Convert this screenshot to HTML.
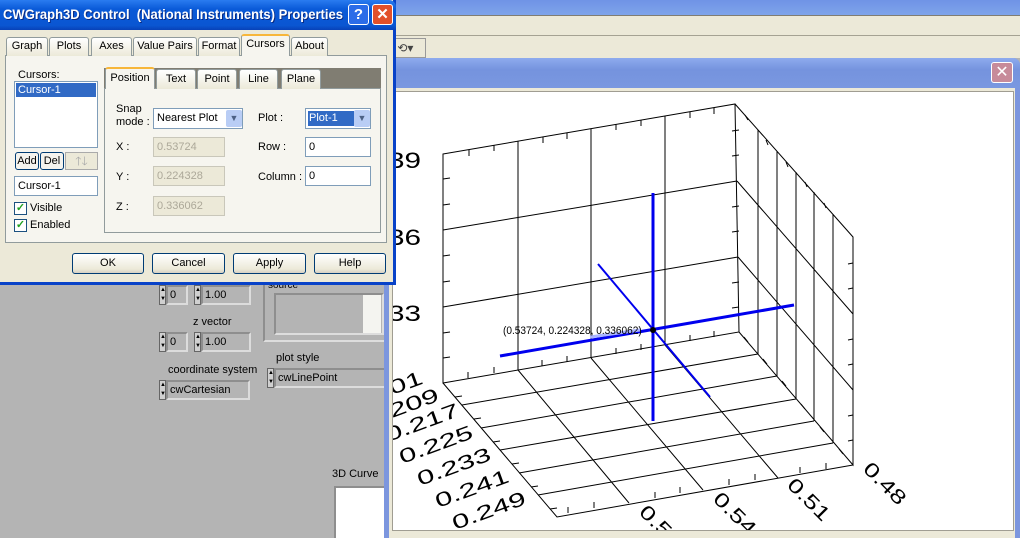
<!DOCTYPE html>
<html><head><meta charset="utf-8"><style>
*{box-sizing:border-box;margin:0;padding:0}
html,body{width:1020px;height:538px;overflow:hidden}
body{position:relative;background:#b4b4b4;font-family:Tahoma,"Liberation Sans",sans-serif;font-size:11px;color:#000}
.a{position:absolute}
.tab{position:absolute;top:37px;height:19px;border:1px solid #919b9c;border-bottom:none;background:linear-gradient(#fff,#ece9d8);border-radius:3px 3px 0 0;text-align:center;line-height:17px}
.stab{position:absolute;top:69px;height:20px;border:1px solid #919b9c;border-bottom:none;background:linear-gradient(#fff,#ece9d8);border-radius:3px 3px 0 0;text-align:center;line-height:19px}
.btn{position:absolute;top:253px;height:21px;border:1px solid #003c74;border-radius:3px;background:linear-gradient(#fff,#ece9d8 80%,#d6d0c5);text-align:center;line-height:19px}
.in{position:absolute;height:20px;border:1px solid #7f9db9;background:#fff;padding-left:3px;line-height:18px}
.dis{position:absolute;height:20px;border:1px solid #c9c7ba;background:#ece9d8;color:#aca899;padding-left:3px;line-height:18px}
.chk{position:absolute;width:13px;height:13px;border:1px solid #1c5180;background:#fff;color:#21a121;font-size:11px;line-height:11px;text-align:center;font-weight:bold}
.lv{position:absolute;border:2px solid #8e8e8e;border-right-color:#dcdcdc;border-bottom-color:#dcdcdc;background:#b4b4b4;height:20px;line-height:16px;padding-left:2px;font-size:11px}
.sp{position:absolute;width:7px;height:20px;background:#d0d0d0;border:1px solid #666;font-size:6px;line-height:9px;text-align:center}
</style></head><body>
<div class="a" style="left:395px;top:0;width:625px;height:15px;background:linear-gradient(#6f93e6,#7ea4ea)"></div>
<div class="a" style="left:395px;top:15px;width:625px;height:43px;background:#ece9d8;border-top:1px solid #807d72"></div>
<div class="a" style="left:395px;top:35px;width:625px;height:1px;background:#a5a293"></div>
<div class="a" style="left:393px;top:38px;width:33px;height:20px;border:1px solid #999;background:#ece9d8;font-size:12px;color:#444;line-height:18px">&nbsp;⟲▾</div>

<div class="sp" style="left:159px;top:285px">▲<br>▼</div><div class="lv" style="left:166px;top:285px;width:22px">0</div>
<div class="sp" style="left:194px;top:285px">▲<br>▼</div><div class="lv" style="left:201px;top:285px;width:50px">1.00</div>
<div class="a" style="left:193px;top:316px">z vector</div>
<div class="sp" style="left:159px;top:332px">▲<br>▼</div><div class="lv" style="left:166px;top:332px;width:22px">0</div>
<div class="sp" style="left:194px;top:332px">▲<br>▼</div><div class="lv" style="left:201px;top:332px;width:50px">1.00</div>
<div class="a" style="left:168px;top:364px">coordinate system</div>
<div class="sp" style="left:159px;top:380px">▲<br>▼</div><div class="lv" style="left:166px;top:380px;width:84px">cwCartesian</div>
<div class="a" style="left:263px;top:282px;width:125px;height:60px;border:2px solid #8e8e8e;border-right-color:#ddd;border-bottom-color:#ddd"></div>
<div class="a" style="left:268px;top:280px;font-size:10px">source</div>
<div class="a" style="left:274px;top:293px;width:110px;height:42px;border:2px solid #8e8e8e;border-right-color:#ddd;border-bottom-color:#ddd"></div>
<div class="a" style="left:363px;top:295px;width:18px;height:38px;background:#f4f4f0"></div>
<div class="a" style="left:276px;top:352px">plot style</div>
<div class="sp" style="left:267px;top:368px">▲<br>▼</div><div class="lv" style="left:274px;top:368px;width:114px">cwLinePoint</div>
<div class="a" style="left:332px;top:468px">3D Curve</div>
<div class="a" style="left:334px;top:486px;width:60px;height:52px;background:#fff;border:2px solid #8e8e8e;border-bottom:none"></div>

<div class="a" style="left:384px;top:58px;width:636px;height:480px;background:#ece9d8;border-radius:7px 7px 0 0;border-left:5px solid #7c96de;border-right:5px solid #7c96de"></div>
<div class="a" style="left:384px;top:58px;width:636px;height:30px;background:linear-gradient(#8eabee,#7593de 40%,#7a98e0);border-radius:7px 7px 0 0"></div>
<div class="a" style="left:991px;top:62px;width:22px;height:21px;background:#c78b9a;border:1px solid #fff;border-radius:3px;color:#fff;font-size:16px;line-height:19px;text-align:center;font-family:'Liberation Sans'">✕</div>
<div class="a" style="left:389px;top:88px;width:626px;height:450px;background:#ece9d8"></div>
<div class="a" style="left:392px;top:91px;width:622px;height:440px;background:#fff;border:1px solid #a09d92"></div>
<svg class="a" style="left:0;top:0" width="1020" height="538" viewBox="0 0 1020 538">
<defs><clipPath id="c"><rect x="393" y="92" width="620" height="438"/></clipPath></defs>
<g clip-path="url(#c)" stroke="#000" stroke-width="1" fill="none">
<path d="M443 154 L735 104 L739 332 L443 383 Z"/>
<path d="M443 230 L737 181 M443 307 L738 257"/>
<path d="M518 141 L518 370 M591 129 L591 358 M665 116 L665 345"/>
<path d="M735 104 L853 237 L853 465 L739 332"/>
<path d="M737 181 L853 314 M738 257 L853 390"/>
<path d="M758 130 L758 354 M777 151 L777 376 M796 172 L796 399 M814 192 L814 421 M833 214 L833 443"/>
<path d="M443 383 L557 517 L853 465"/>
<path d="M462 405 L758 354 M481 428 L777 376 M500 450 L796 399 M519 473 L814 421 M538 495 L833 443"/>
<path d="M518 370 L629 503 M591 358 L703 490 M665 345 L778 478"/>
<path d="M443 179 L450 178 M443 205 L450 204 M443 256 L450 255 M443 282 L450 281 M443 333 L450 332 M443 358 L450 357 M469 150 L469 156 M494 145 L494 151 M543 137 L543 143 M567 133 L567 139 M616 124 L616 130 M641 120 L641 126 M690 112 L690 118 M714 108 L714 114 M739 130 L732 131 M739 155 L732 156 M739 206 L732 207 M739 231 L732 232 M739 282 L732 283 M739 307 L732 308 M853 263 L848 264 M853 288 L848 289 M853 339 L848 340 M853 364 L848 365 M853 415 L848 416 M853 440 L848 441 M455 397 L462 396 M474 419 L481 418 M493 442 L500 441 M512 464 L519 463 M531 487 L538 486 M550 509 L557 508 M568 513 L568 507 M594 508 L594 502 M655 498 L655 492 M680 493 L680 487 M729 485 L729 479 M755 480 L755 474 M800 473 L800 467 M826 469 L826 463 M748 342 L744 337 M767 364 L763 359 M786 386 L782 381 M805 409 L801 404 M824 432 L820 427 M843 454 L839 449 M468 378 L468 372 M494 373 L494 367 M542 366 L542 360 M567 362 L567 356 M616 354 L616 348 M641 350 L641 344 M690 341 L690 335 M714 337 L714 331 M745 115 L748 120 M766 140 L768 145 M786 162 L788 167 M805 182 L807 187 M824 203 L826 208"/>
</g>
<g clip-path="url(#c)" stroke="#0000ee" stroke-linecap="butt">
<line x1="500" y1="356" x2="794" y2="305" stroke-width="3"/>
<line x1="653" y1="193" x2="653" y2="421" stroke-width="3"/>
<line x1="598" y1="264" x2="710" y2="397" stroke-width="2"/>
<line x1="590" y1="337" x2="640" y2="330" stroke="#aab4ff" stroke-width="3"/>
</g>
<circle cx="653" cy="330" r="3" fill="#000"/>
<g clip-path="url(#c)" font-family="Liberation Sans,sans-serif" fill="#000">
<text font-size="11" transform="translate(503,334) scale(0.92,1)">(0.53724, 0.224328, 0.336062)</text>
<g font-size="22">
<text transform="translate(388,168) scale(1.35,1)">39</text>
<text transform="translate(388,245) scale(1.35,1)">36</text>
<text transform="translate(388,321) scale(1.35,1)">33</text>
<text transform="translate(392,395) rotate(-20) scale(1.4,0.9)">01</text>
<text transform="translate(392,418) rotate(-20) scale(1.4,0.9)">209</text>
<text transform="translate(388,442) rotate(-20) scale(1.4,0.9)">0.217</text>
<text transform="translate(402,464) rotate(-20) scale(1.4,0.9)">0.225</text>
<text transform="translate(420,486) rotate(-20) scale(1.4,0.9)">0.233</text>
<text transform="translate(438,508) rotate(-20) scale(1.4,0.9)">0.241</text>
<text transform="translate(455,530) rotate(-20) scale(1.4,0.9)">0.249</text>
<text transform="translate(862,470) rotate(45) scale(1.2,0.9)">0.48</text>
<text transform="translate(786,486) rotate(45) scale(1.2,0.9)">0.51</text>
<text transform="translate(712,500) rotate(45) scale(1.2,0.9)">0.54</text>
<text transform="translate(638,513) rotate(45) scale(1.2,0.9)">0.57</text>
</g></g>
</svg>

<div class="a" style="left:0;top:0;width:396px;height:285px;background:#ece9d8;border:3px solid #0842c8;border-top:none;border-left:none"></div>
<div class="a" style="left:0;top:0;width:396px;height:30px;background:linear-gradient(#2a7cf0,#0a5ad8 30%,#0a56d2 85%,#0842b8);border-radius:0 7px 0 0"></div>
<div class="a" style="left:3px;top:6px;color:#fff;font-weight:bold;font-size:14px;font-family:'Liberation Sans',sans-serif;text-shadow:1px 1px #0a2a80;white-space:nowrap;transform:scaleX(0.93);transform-origin:0 0">CWGraph3D Control&nbsp; (National Instruments) Properties</div>
<div class="a" style="left:348px;top:4px;width:21px;height:21px;background:#2b6ce8;border:1px solid #fff;border-radius:3px;color:#fff;font-weight:bold;font-size:15px;text-align:center;line-height:19px">?</div>
<div class="a" style="left:372px;top:4px;width:21px;height:21px;background:#e2502a;border:1px solid #fff;border-radius:3px;color:#fff;font-weight:bold;font-size:15px;text-align:center;line-height:19px">✕</div>

<div class="a" style="left:5px;top:55px;width:382px;height:188px;border:1px solid #919b9c;background:#f6f5ef"></div>
<div class="tab" style="left:6px;width:42px">Graph</div>
<div class="tab" style="left:49px;width:40px">Plots</div>
<div class="tab" style="left:91px;width:41px">Axes</div>
<div class="tab" style="left:133px;width:64px">Value Pairs</div>
<div class="tab" style="left:198px;width:42px">Format</div>
<div class="tab" style="left:241px;top:34px;height:22px;width:49px;background:#f6f5ef;border-top:2px solid #f7b63a">Cursors</div>
<div class="tab" style="left:291px;width:37px">About</div>

<div class="a" style="left:18px;top:69px">Cursors:</div>
<div class="a" style="left:14px;top:81px;width:84px;height:67px;background:#fff;border:1px solid #7f9db9"></div>
<div class="a" style="left:16px;top:83px;width:80px;height:14px;background:#316ac5;color:#fff;padding-left:2px;line-height:14px">Cursor-1</div>
<div class="a" style="left:15px;top:152px;width:24px;height:18px;border:1px solid #003c74;border-radius:3px;background:#f4f3ee;text-align:center;line-height:16px">Add</div>
<div class="a" style="left:40px;top:152px;width:24px;height:18px;border:1px solid #003c74;border-radius:3px;background:#f4f3ee;text-align:center;line-height:16px">Del</div>
<div class="a" style="left:65px;top:152px;width:33px;height:18px;background:#ece9d8;border:1px solid #aaa;color:#aaa;font-size:12px;line-height:16px;text-align:center">🡑🡓</div>
<div class="in" style="left:14px;top:176px;width:84px">Cursor-1</div>
<div class="chk" style="left:14px;top:202px">✓</div><div class="a" style="left:30px;top:202px">Visible</div>
<div class="chk" style="left:14px;top:219px">✓</div><div class="a" style="left:30px;top:219px">Enabled</div>

<div class="a" style="left:104px;top:68px;width:277px;height:21px;background:#807d72"></div>
<div class="a" style="left:104px;top:88px;width:277px;height:145px;border:1px solid #919b9c;background:#f6f5ef"></div>
<div class="stab" style="left:105px;top:67px;height:22px;width:50px;background:#f6f5ef;border-top:2px solid #f7b63a">Position</div>
<div class="stab" style="left:156px;width:40px">Text</div>
<div class="stab" style="left:197px;width:40px">Point</div>
<div class="stab" style="left:239px;width:39px">Line</div>
<div class="stab" style="left:281px;width:40px">Plane</div>

<div class="a" style="left:116px;top:103px;line-height:13px">Snap<br>mode :</div>
<div class="in" style="left:153px;top:108px;width:90px;height:21px">Nearest Plot</div>
<div class="a" style="left:226px;top:110px;width:16px;height:17px;background:#b9cdf5;border-radius:2px;color:#4d6185;text-align:center;font-size:9px;line-height:17px">▼</div>
<div class="a" style="left:258px;top:112px">Plot :</div>
<div class="in" style="left:305px;top:108px;width:66px;height:21px;padding:2px"><div style="background:#316ac5;color:#fff;height:15px;width:46px;line-height:15px;padding-left:1px">Plot-1</div></div>
<div class="a" style="left:354px;top:110px;width:16px;height:17px;background:#b9cdf5;border-radius:2px;color:#4d6185;text-align:center;font-size:9px;line-height:17px">▼</div>
<div class="a" style="left:116px;top:141px">X :</div><div class="dis" style="left:153px;top:137px;width:72px">0.53724</div>
<div class="a" style="left:116px;top:171px">Y :</div><div class="dis" style="left:153px;top:166px;width:72px">0.224328</div>
<div class="a" style="left:116px;top:201px">Z :</div><div class="dis" style="left:153px;top:196px;width:72px">0.336062</div>
<div class="a" style="left:258px;top:141px">Row :</div><div class="in" style="left:305px;top:137px;width:66px">0</div>
<div class="a" style="left:258px;top:171px">Column :</div><div class="in" style="left:305px;top:166px;width:66px">0</div>

<div class="btn" style="left:72px;width:72px">OK</div>
<div class="btn" style="left:152px;width:73px">Cancel</div>
<div class="btn" style="left:233px;width:73px">Apply</div>
<div class="btn" style="left:314px;width:72px">Help</div>
</body></html>
